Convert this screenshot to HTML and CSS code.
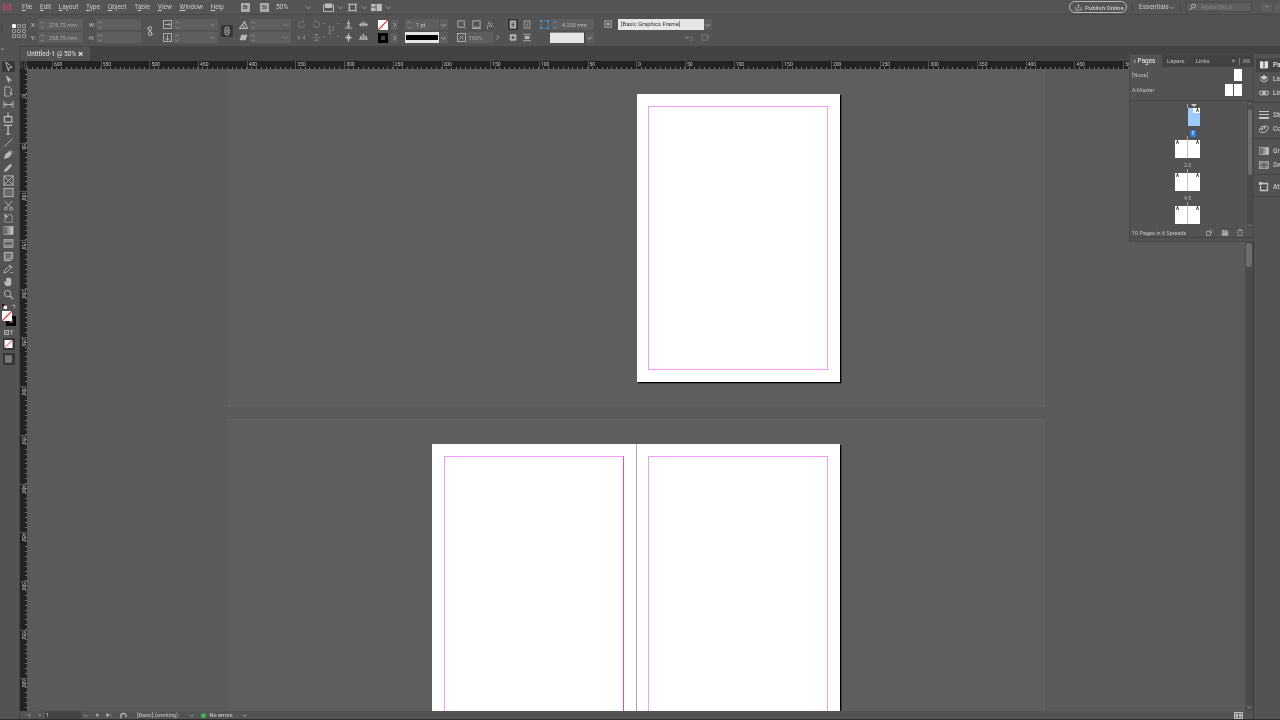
FILE: index.html
```html
<!DOCTYPE html>
<html lang="en">
<head>
    <meta charset="UTF-8">
    <title>Untitled-1 @ 50%</title>
    <link rel="stylesheet" href="styles.css">
</head>
<body>
    <svg class="defs" width="0" height="0">
        <symbol id="spin" viewBox="0 0 8 10"><path d="M2 3.5L4 1.5L6 3.5M2 6.5L4 8.5L6 6.5" fill="none" stroke="currentColor"/></symbol>
        <symbol id="chev" viewBox="0 0 8 8"><path d="M1.5 3L4 5.5L6.5 3" fill="none" stroke="currentColor"/></symbol>
        <symbol id="next" viewBox="0 0 8 8"><path d="M3 1.5L5.5 4L3 6.5" fill="none" stroke="currentColor"/></symbol>
        <symbol id="slash" viewBox="0 0 10 10"><rect width="10" height="10" fill="#fff"/><path d="M0 10L10 0" stroke="#e8272c" stroke-width="1.2"/></symbol>
        <symbol id="page-ic" viewBox="0 0 10 10"><path d="M5 2C3.5 1 2 1 1 1.5V8.500C2 8 3.500 8 5 9C6.500 8 8 8 9 8.500V1.500C8 1 6.500 1 5 2Z" fill="currentColor"/><path d="M5 2V9" stroke="#444"/></symbol>
    </svg>

    <header class="menubar">
        <span class="logo">Id</span>
        <nav class="menus">
            <span><u>F</u>ile</span>
            <span><u>E</u>dit</span>
            <span><u>L</u>ayout</span>
            <span><u>T</u>ype</span>
            <span><u>O</u>bject</span>
            <span>T<u>a</u>ble</span>
            <span><u>V</u>iew</span>
            <span><u>W</u>indow</span>
            <span><u>H</u>elp</span>
        </nav>
        <span class="app-badge badge-br">Br</span>
        <span class="app-badge badge-st">St</span>
        <span class="zoom-level">50%</span>
        <svg class="ic-chev zoom-chev"><use href="#chev"/></svg>
        <svg class="ic-view" viewBox="0 0 12 10"><rect x="0.500" y="2.500" width="11" height="7" fill="none" stroke="currentColor"/><rect x="2" y="0.500" width="8" height="5" fill="currentColor"/></svg>
        <svg class="ic-chev"><use href="#chev"/></svg>
        <svg class="ic-view view-next" viewBox="0 0 12 10"><path d="M2.500 1.500H9.500V8.500H2.500Z" fill="none" stroke="currentColor" stroke-width="1.500"/><path d="M0 0H2M10 0H12M0 10H2M10 10H12" stroke="currentColor"/></svg>
        <svg class="ic-chev"><use href="#chev"/></svg>
        <svg class="ic-view view-next" viewBox="0 0 12 10"><rect y="1" width="5" height="3" fill="currentColor"/><rect x="6" y="1" width="6" height="8" fill="currentColor"/><rect y="5" width="5" height="4" fill="currentColor"/></svg>
        <svg class="ic-chev"><use href="#chev"/></svg>

        <div class="menu-right">
            <span class="publish">
                <svg viewBox="0 0 8 8"><path d="M1 3.500V7H7V3.500M4 5V1M2.700 2.200L4 1L5.300 2.200" fill="none" stroke="currentColor" stroke-width=".8"/></svg>
                Publish Online
            </span>
            <span class="essentials">Essentials</span>
            <svg class="ic-chev"><use href="#chev"/></svg>
            <span class="menu-sep"></span>
            <span class="search">
                <svg viewBox="0 0 8 8"><circle cx="4.500" cy="3" r="2" fill="none" stroke="currentColor" stroke-width=".8"/><path d="M3 4.500L1 7" stroke="currentColor"/></svg>
                Adobe Stock
            </span>
            <span class="win-btn">&minus;</span>
            <span class="win-btn win-cut"></span>
        </div>
    </header>

    <section class="controlbar">
        <div class="grip"></div>
        <div class="proxy">
            <i class="on"></i><i></i><i></i><i></i><i></i><i></i><i></i><i></i><i></i>
        </div>

        <div class="group g-pos">
            <div class="row"><label>X:</label><div class="field"><svg class="ic-spin"><use href="#spin"/></svg>276.75 mm</div></div>
            <div class="row"><label>Y:</label><div class="field"><svg class="ic-spin"><use href="#spin"/></svg>258.75 mm</div></div>
        </div>
        <div class="group g-size">
            <div class="row"><label>W:</label><div class="field"><svg class="ic-spin"><use href="#spin"/></svg></div></div>
            <div class="row"><label>H:</label><div class="field"><svg class="ic-spin"><use href="#spin"/></svg></div></div>
        </div>
        <svg class="ic-link" viewBox="0 0 8 10"><rect x="2.500" y=".5" width="3" height="4" rx="1.500" fill="none" stroke="currentColor"/><rect x="2.500" y="5.500" width="3" height="4" rx="1.500" fill="none" stroke="currentColor"/><path d="M1 1.500L7 8.500" stroke="currentColor"/></svg>

        <div class="group g-scale">
            <div class="row">
                <svg class="ic-box" viewBox="0 0 10 10"><rect x=".5" y=".5" width="9" height="9" fill="none" stroke="currentColor"/><path d="M2 5H8M6 3L8 5L6 7" fill="none" stroke="currentColor"/></svg>
                <div class="field"><svg class="ic-spin"><use href="#spin"/></svg><svg class="ic-chev end"><use href="#chev"/></svg></div>
            </div>
            <div class="row">
                <svg class="ic-box" viewBox="0 0 10 10"><rect x=".5" y=".5" width="9" height="9" fill="none" stroke="currentColor"/><path d="M5 2V8M3 6L5 8L7 6" fill="none" stroke="currentColor"/></svg>
                <div class="field"><svg class="ic-spin"><use href="#spin"/></svg><svg class="ic-chev end"><use href="#chev"/></svg></div>
            </div>
        </div>
        <div class="lock-btn"><svg viewBox="0 0 6 10"><rect x="1" y="1" width="4" height="8" rx="2" fill="none" stroke="currentColor"/><path d="M3 3V7" stroke="currentColor"/></svg></div>

        <div class="group g-rot">
            <div class="row">
                <svg class="ic-box" viewBox="0 0 8 8"><path d="M0.500 7.500H7.500L5 1.500Z M3.500 4.500L5 7.500" fill="none" stroke="currentColor"/></svg>
                <div class="field"><svg class="ic-spin"><use href="#spin"/></svg><svg class="ic-chev end"><use href="#chev"/></svg></div>
            </div>
            <div class="row">
                <svg class="ic-box" viewBox="0 0 8 8"><path d="M2 1.500H7.500L6 6.500H0.500Z" fill="currentColor"/></svg>
                <div class="field"><svg class="ic-spin"><use href="#spin"/></svg><svg class="ic-chev end"><use href="#chev"/></svg></div>
            </div>
        </div>

        <div class="icon-grid dim g-rotate">
            <svg viewBox="0 0 10 10"><path d="M8.500 5A3.500 3.500 0 1 1 5 1.500H7" fill="none" stroke="currentColor"/><path d="M7 0V3" stroke="currentColor"/></svg>
            <svg viewBox="0 0 10 10"><path d="M1.500 5A3.500 3.500 0 1 0 5 1.500H3" fill="none" stroke="currentColor"/><path d="M3 0V3" stroke="currentColor"/></svg>
            <svg viewBox="0 0 10 10"><path d="M1 2L4 5L1 8ZM9 2L6 5L9 8Z" fill="currentColor"/></svg>
            <svg viewBox="0 0 10 10"><path d="M2 1L5 4L8 1ZM2 9L5 6L8 9Z" fill="currentColor"/><path d="M1 5H9" stroke="currentColor"/></svg>
        </div>
        <div class="p-proxy">P</div>

        <div class="icon-grid g-align">
            <svg viewBox="0 0 10 10"><path d="M5 0V3M1 9H9M5 5V9M3 7H7" stroke="currentColor" fill="none"/><circle cx="5" cy="4" r="1.500" fill="currentColor"/></svg>
            <svg viewBox="0 0 10 10"><path d="M0 5H10" stroke="currentColor"/><path d="M1 7V4L3 3V7ZM4 7V2L6 2V7ZM7 7V3L9 4V7Z" fill="currentColor"/></svg>
            <svg viewBox="0 0 10 10"><path d="M5 0V10M1 5H9" stroke="currentColor"/><circle cx="5" cy="5" r="2.500" fill="currentColor"/></svg>
            <svg viewBox="0 0 10 10"><path d="M0 7H10" stroke="currentColor"/><path d="M1 7V4L3 3V7ZM4 7V1L6 1V7ZM7 7V3L9 4V7Z" fill="currentColor"/></svg>
        </div>

        <div class="group g-swatch">
            <div class="row"><svg class="swatch"><use href="#slash"/></svg><span class="arrow-btn"><svg><use href="#next"/></svg></span></div>
            <div class="row"><span class="swatch stroke-swatch"></span><span class="arrow-btn"><svg><use href="#next"/></svg></span></div>
        </div>

        <div class="group g-stroke">
            <div class="row"><div class="field"><svg class="ic-spin"><use href="#spin"/></svg>1 pt</div><span class="arrow-btn wide"><svg><use href="#chev"/></svg></span></div>
            <div class="row"><div class="stroke-line"><b></b></div><span class="arrow-btn wide"><svg><use href="#chev"/></svg></span></div>
        </div>

        <div class="group g-fx">
            <div class="row icons-row">
                <svg viewBox="0 0 10 10"><rect x="1" y="1" width="7" height="7" fill="none" stroke="currentColor"/><path d="M9 9H10" stroke="currentColor"/></svg>
                <svg viewBox="0 0 10 10"><rect x="1" y="1" width="8" height="7" fill="none" stroke="currentColor"/><path d="M0 9.500H10" stroke="currentColor"/></svg>
                <span class="fx-text">fx.</span>
            </div>
            <div class="row">
                <svg class="ic-box" viewBox="0 0 10 10"><rect x=".5" y=".5" width="9" height="9" fill="none" stroke="currentColor"/><path d="M3 3L7 7M7 3L3 7" stroke="currentColor"/></svg>
                <div class="field short">100%</div>
                <svg class="ic-chev"><use href="#next"/></svg>
            </div>
        </div>

        <div class="icon-grid g-wrap">
            <span class="on"><svg viewBox="0 0 10 10"><rect x="1" y="0" width="8" height="10" fill="currentColor"/><path d="M3 3H7M3 5H7M3 7H7" stroke="#333"/></svg></span>
            <span><svg viewBox="0 0 10 10"><rect x="1.500" y=".5" width="7" height="9" fill="none" stroke="currentColor"/><path d="M4 3H6M4 5H6M4 7H6" stroke="currentColor"/></svg></span>
            <span><svg viewBox="0 0 10 10"><rect x="1" y="1" width="8" height="8" fill="currentColor"/><circle cx="5" cy="5" r="2" fill="#535353"/></svg></span>
            <span><svg viewBox="0 0 10 10"><path d="M0 1H10M0 9H10" stroke="currentColor"/><rect x="2" y="3" width="6" height="4" fill="currentColor"/></svg></span>
        </div>

        <div class="group g-corner">
            <div class="row">
                <svg class="ic-corner" viewBox="0 0 10 10"><rect x="1" y="1" width="8" height="8" fill="none" stroke="#4a9ce8" stroke-dasharray="2 1"/><path d="M0 0H2V2H0ZM8 0H10V2H8ZM0 8H2V10H0ZM8 8H10V10H8Z" fill="#4a9ce8"/></svg>
                <div class="field"><svg class="ic-spin"><use href="#spin"/></svg>4.233 mm</div>
            </div>
            <div class="row corner-row"><div class="corner-swatch"></div><span class="arrow-btn wide"><svg><use href="#chev"/></svg></span></div>
        </div>

        <div class="group g-style">
            <div class="row">
                <svg class="ic-box" viewBox="0 0 10 10"><rect x="1" y="1" width="7" height="7" fill="none" stroke="currentColor"/><rect x="3" y="3" width="3" height="3" fill="currentColor"/></svg>
                <div class="style-select">[Basic Graphics Frame]</div>
                <span class="arrow-btn wide"><svg><use href="#chev"/></svg></span>
            </div>
            <div class="row style-tools">
                <svg viewBox="0 0 10 8"><path d="M2 4H7A2 2 0 1 1 7 7M2 4L4 2M2 4L4 6" fill="none" stroke="currentColor"/></svg>
                <svg viewBox="0 0 10 8"><rect x="1" y="1" width="6" height="6" fill="none" stroke="currentColor"/><path d="M7 5L10 2" stroke="currentColor"/></svg>
            </div>
        </div>
    </section>

    <main class="workspace">
        <aside class="tools">
            <div class="tools-head">&raquo;</div>
            <svg class="tool selected" viewBox="0 0 12 12"><path d="M3 1L10 7L6.500 7.500L6 11Z" fill="none" stroke="currentColor"/></svg>
            <svg class="tool" viewBox="0 0 12 12"><path d="M3 1L10 7L6.500 7.500L6 11Z" fill="currentColor"/></svg>
            <svg class="tool" viewBox="0 0 12 12"><path d="M2 1H7L9 3V7M2 1V11H7" fill="none" stroke="currentColor"/><path d="M7 6L11 9L9 9.500L8.500 11.500Z" fill="currentColor"/></svg>
            <svg class="tool" viewBox="0 0 12 12"><path d="M1 2V10M11 2V10M2 6H10M4 4L2 6L4 8M8 4L10 6L8 8" fill="none" stroke="currentColor"/></svg>
            <svg class="tool" viewBox="0 0 12 12"><rect x="1.500" y="5" width="8" height="6" fill="none" stroke="currentColor" stroke-width="1.300"/><path d="M5.500 0V5M4 3.500L5.500 5.500L7 3.500" fill="none" stroke="currentColor"/><path d="M11 10H12V11H11Z" fill="currentColor"/></svg>
            <svg class="tool" viewBox="0 0 12 12"><path d="M1 1.500H10M5.500 1.500V11M3.500 11H7.500" fill="none" stroke="currentColor" stroke-width="1.500"/></svg>
            <svg class="tool" viewBox="0 0 12 12"><path d="M1.500 10.500L10.500 1.500" stroke="currentColor"/></svg>
            <svg class="tool" viewBox="0 0 12 12"><path d="M1 11L2.500 6L7 2L10 5L6 9.500Z" fill="currentColor"/><path d="M8 1L11 4" stroke="currentColor"/></svg>
            <svg class="tool" viewBox="0 0 12 12"><path d="M1 11L2 8L8 2L10 4L4 10Z" fill="currentColor"/></svg>
            <svg class="tool" viewBox="0 0 12 12"><rect x="1" y="1" width="10" height="10" fill="none" stroke="currentColor"/><path d="M1 1L11 11M11 1L1 11" stroke="currentColor"/></svg>
            <svg class="tool" viewBox="0 0 12 12"><rect x="1" y="1.500" width="10" height="9" fill="#6a6a6a" stroke="currentColor"/></svg>
            <svg class="tool" viewBox="0 0 12 12"><circle cx="3" cy="9.500" r="1.500" fill="none" stroke="currentColor"/><circle cx="9" cy="9.500" r="1.500" fill="none" stroke="currentColor"/><path d="M4 8L10 1M8 8L2 1" stroke="currentColor"/></svg>
            <svg class="tool" viewBox="0 0 12 12"><rect x="2" y="2" width="8" height="8" fill="none" stroke="currentColor" stroke-dasharray="2 1"/><path d="M1 1L6 4L4 4.500L3.500 6.500Z" fill="currentColor"/></svg>
            <svg class="tool" viewBox="0 0 12 12"><defs><linearGradient id="gr"><stop offset="0" stop-color="#555"/><stop offset="1" stop-color="#ccc"/></linearGradient></defs><rect x="1" y="1.500" width="10" height="9" fill="url(#gr)" stroke="currentColor" stroke-width=".6"/></svg>
            <svg class="tool" viewBox="0 0 12 12"><rect x="1" y="1.500" width="10" height="9" fill="#8a8a8a" stroke="currentColor" stroke-width=".6"/><path d="M2 6H10" stroke="#555" stroke-width="2"/></svg>
            <svg class="tool" viewBox="0 0 12 12"><path d="M1.500 1.500H10.500V8L8 10.500H1.500Z" fill="#8a8a8a" stroke="currentColor"/><path d="M3 4H9M3 6.500H7" stroke="#444"/></svg>
            <svg class="tool" viewBox="0 0 12 12"><path d="M1 11L2 8L7 3L9 5L4 10Z" fill="none" stroke="currentColor"/><path d="M7 1.500L10.500 5L9 5.500L6.500 3Z" fill="currentColor"/><path d="M8 10.500H11" stroke="currentColor"/></svg>
            <svg class="tool" viewBox="0 0 12 12"><path d="M3 11L1 6.500L2 5.500L3.500 7V2.500H4.500V5.500V1.500H6V5.500V2H7.500V5.500V3H9V8.500L8 11Z" fill="currentColor"/></svg>
            <svg class="tool" viewBox="0 0 12 12"><circle cx="5" cy="5" r="3.500" fill="none" stroke="currentColor"/><path d="M7.500 7.500L11 11" stroke="currentColor" stroke-width="1.300"/></svg>
            <div class="color-mini">
                <svg viewBox="0 0 6 6"><rect width="4" height="4" fill="#111"/><rect x="2" y="2" width="4" height="4" fill="#fff"/><path d="M0 4L4 0" stroke="#e8272c"/></svg>
                <svg viewBox="0 0 6 6"><path d="M1 1.500H4.500V5" fill="none" stroke="currentColor"/></svg>
            </div>
            <div class="fill-stroke">
                <span class="stroke-box"></span>
                <svg class="fill-box"><use href="#slash"/></svg>
            </div>
            <div class="format-row">
                <svg viewBox="0 0 6 6"><rect x=".5" y=".5" width="5" height="5" fill="none" stroke="currentColor"/><rect x="2" y="2" width="2" height="2" fill="currentColor"/></svg>
                <svg viewBox="0 0 6 6"><path d="M.5 1H5.500M3 1V6" fill="none" stroke="currentColor"/></svg>
            </div>
            <div class="tool-btn"><svg class="apply"><use href="#slash"/></svg></div>
            <div class="tool-btn"><svg viewBox="0 0 10 10"><rect x="1" y="1" width="8" height="8" fill="#707070" stroke="#999" stroke-width=".6"/><rect x="3" y="3" width="4" height="4" fill="none" stroke="#aaa" stroke-width=".6" stroke-dasharray="1 .5"/></svg></div>
        </aside>

        <div class="docarea">
            <div class="tabbar">
                <div class="tab">Untitled-1 @ 50% <span class="tab-close">&times;</span></div>
            </div>
            <div class="ruler-row">
                <div class="ruler-corner"></div>
                <div class="h-ruler">
                    <span>600</span><span>550</span><span>500</span><span>450</span><span>400</span><span>350</span>
                    <span>300</span><span>250</span><span>200</span><span>150</span><span>100</span><span>50</span>
                    <span>0</span><span>50</span><span>100</span><span>150</span><span>200</span><span>250</span>
                    <span>300</span><span>350</span><span>400</span><span>450</span><span>500</span>
                </div>
            </div>
            <div class="view-row">
                <div class="v-ruler">
                    <span>0</span><span>50</span><span>100</span><span>150</span><span>200</span><span>250</span><span>300</span>
                    <span>350</span><span>400</span><span>450</span><span>500</span><span>550</span><span>600</span>
                </div>
                <div class="canvas">
                    <div class="board board-first">
                        <div class="page"><div class="guide"></div></div>
                    </div>
                    <div class="board board-second">
                        <div class="page page-left"><div class="guide"></div></div>
                        <div class="page"><div class="guide"></div></div>
                    </div>
                </div>
                <div class="v-scroll">
                    <div class="v-thumb"></div>
                    <svg class="ic-chev"><use href="#chev"/></svg>
                </div>
            </div>
            <footer class="statusbar">
                <svg class="st-ic st-first" viewBox="0 0 8 8"><path d="M1.500 1V7M7 1.500L3.500 4L7 6.500Z" fill="currentColor" stroke="currentColor" stroke-width=".5"/></svg>
                <svg class="st-ic" viewBox="0 0 8 8"><path d="M6 1.500L2.500 4L6 6.500Z" fill="currentColor"/></svg>
                <div class="page-field">1</div>
                <svg class="ic-chev light"><use href="#chev"/></svg>
                <svg class="st-ic st-light st-next" viewBox="0 0 8 8"><path d="M2 1.500L5.500 4L2 6.500Z" fill="currentColor"/></svg>
                <svg class="st-ic st-light" viewBox="0 0 8 8"><path d="M6.500 1V7M1 1.500L4.500 4L1 6.500Z" fill="currentColor" stroke="currentColor" stroke-width=".5"/></svg>
                <svg class="st-ic st-light st-arc" viewBox="0 0 8 8"><path d="M1 7V4.500A3 3 0 0 1 7 4.500V6" fill="none" stroke="currentColor" stroke-width="1.400"/></svg>
                <span class="profile">[Basic] (working)</span>
                <svg class="ic-chev light"><use href="#chev"/></svg>
                <span class="status-dot"></span>
                <span class="errors">No errors</span>
                <svg class="ic-chev light"><use href="#chev"/></svg>
                <svg class="split-view" viewBox="0 0 9 7"><rect x=".5" y=".5" width="8" height="6" fill="none" stroke="currentColor"/><rect x="1.500" y="1.500" width="2.500" height="4" fill="currentColor"/><rect x="5" y="1.500" width="2.500" height="4" fill="currentColor"/></svg>
            </footer>
        </div>

        <aside class="dock">
            <div class="dock-section">
                <div class="dock-item active"><svg><use href="#page-ic"/></svg><span>Pa</span></div>
                <div class="dock-item"><svg viewBox="0 0 10 10"><path d="M5 1L9 3.500L5 6L1 3.500Z" fill="currentColor"/><path d="M1 5.500L5 8L9 5.500" fill="none" stroke="currentColor"/></svg><span>La</span></div>
                <div class="dock-item"><svg viewBox="0 0 10 10"><rect x=".5" y="3" width="4" height="4" rx="2" fill="none" stroke="currentColor"/><rect x="3.500" y="3" width="3" height="4" rx="1.500" fill="none" stroke="currentColor"/><rect x="5.500" y="3" width="4" height="4" rx="2" fill="none" stroke="currentColor"/></svg><span>Lin</span></div>
            </div>
            <div class="dock-section">
                <div class="dock-item"><svg viewBox="0 0 10 10"><path d="M0 1.500H10M0 4.500H10" stroke="currentColor"/><path d="M0 8H10" stroke="currentColor" stroke-width="2"/></svg><span>Str</span></div>
                <div class="dock-item"><svg viewBox="0 0 10 10"><path d="M.5 6.500C.5 4 3 2 6 2C8 2 9.500 3 9.500 4.500C9.500 6 7 5.500 7 7C7 8 6 8.500 4.500 8.500C2 8.500 .5 8 .5 6.500Z" fill="none" stroke="currentColor"/><circle cx="3" cy="5" r="1" fill="currentColor"/><circle cx="5.500" cy="3.800" r="1" fill="currentColor"/></svg><span>Co</span></div>
            </div>
            <div class="dock-section">
                <div class="dock-item"><svg viewBox="0 0 10 10"><rect x=".5" y="1.500" width="9" height="7" fill="url(#gr)" stroke="currentColor" stroke-width=".6"/></svg><span>Gr</span></div>
                <div class="dock-item"><svg viewBox="0 0 10 10"><rect x=".5" y="1.500" width="9" height="7" fill="#8a8a8a" stroke="currentColor" stroke-width=".6"/><path d="M1 5H9" stroke="#555"/><path d="M5 1.500V8.500" stroke="#555"/></svg><span>Sw</span></div>
            </div>
            <div class="dock-section">
                <div class="dock-item"><svg viewBox="0 0 10 10"><path d="M2.500 1.500H8.500V8.500H1.500V4" fill="none" stroke="currentColor" stroke-width="1.300"/><rect x="0" y="0" width="3" height="3" fill="currentColor"/></svg><span>Att</span></div>
            </div>
        </aside>

        <section class="pages-panel">
            <div class="panel-tabs">
                <span class="panel-tab active"><i>&#8661;</i> Pages</span>
                <span class="panel-tab layers">Layers</span>
                <span class="panel-tab links">Links</span>
                <span class="panel-more">&raquo;</span>
                <span class="panel-menu"></span>
            </div>
            <div class="masters">
                <div class="master-row"><span>[None]</span><div class="master-pages"><i></i></div></div>
                <div class="master-row"><span>A-Master</span><div class="master-pages"><i></i><i></i></div></div>
            </div>
            <div class="page-list">
                <div class="thumbs">
                    <div class="marker"></div>
                    <div class="spread spread-single"><div class="leaf sel"><b>A</b></div></div>
                    <div class="spread-label"><span class="num-sel">1</span></div>
                    <div class="spread"><div class="leaf"><b>A</b></div><div class="leaf right"><b>A</b></div></div>
                    <div class="spread-label">2-3</div>
                    <div class="spread"><div class="leaf"><b>A</b></div><div class="leaf right"><b>A</b></div></div>
                    <div class="spread-label">4-5</div>
                    <div class="spread"><div class="leaf"><b>A</b></div><div class="leaf right"><b>A</b></div></div>
                </div>
                <div class="list-scroll">
                    <svg class="flip"><use href="#chev"/></svg>
                    <div class="list-thumb"></div>
                    <svg class="end"><use href="#chev"/></svg>
                </div>
            </div>
            <div class="panel-foot">
                <span>10 Pages in 6 Spreads</span>
                <svg viewBox="0 0 10 8"><rect x=".5" y="3" width="5" height="4.500" fill="none" stroke="currentColor"/><path d="M3 3L5.500 .5L8 3L5.500 5.500" fill="none" stroke="currentColor"/></svg>
                <svg viewBox="0 0 10 8"><path d="M1 1H7L9 3V8H1Z" fill="currentColor"/><path d="M1 3.500H5V.5" fill="none" stroke="#535353" stroke-width=".6"/></svg>
                <svg viewBox="0 0 10 8"><path d="M2 1.500H8M3.500 1.500V.5H6.500V1.500M2.500 2.500V8H7.500V2.500" fill="none" stroke="currentColor" stroke-width=".9"/></svg>
            </div>
        </section>
    </main>
</body>
</html>
```

FILE: styles.css
```css
* {
    box-sizing: border-box;
}
html, body {
    margin: 0;
    width: 1280px;
    height: 720px;
    overflow: hidden;
}
body {
    display: flex;
    flex-direction: column;
    font-family: 'Roboto', 'Liberation Sans', sans-serif;
    font-size: 6.500px;
    color: #c9c9c9;
    background-color: #535353;
    border-bottom: 1px solid #2b2b2b;
}
svg {
    display: block;
    flex: none;
}
.defs {
    position: absolute;
}
/* the reference is a soft, scaled capture of the app chrome */
.menubar, .controlbar, .tools, .tabbar, .ruler-row, .v-ruler, .statusbar, .dock, .pages-panel {
    filter: blur(.35px);
}

/* menu bar */
.menubar {
    display: flex;
    align-items: center;
    height: 15px;
    flex: none;
    border-bottom: 1px solid #474747;
    background-color: #555;
}
.logo {
    width: 22px;
    padding-left: 2px;
    font-size: 11px;
    font-weight: 700;
    color: #b5436f;
}
.menus {
    display: flex;
    gap: 7.800px;
}
.app-badge {
    display: flex;
    align-items: center;
    justify-content: center;
    width: 9px;
    height: 9px;
    font-size: 5px;
    font-weight: 700;
    color: #444;
    background-color: #a9a9a9;
}
.badge-br {
    margin-left: 17px;
}
.badge-st {
    margin-left: 10px;
}
.zoom-level {
    width: 29px;
    margin-left: 7px;
}
.ic-chev {
    width: 7px;
    height: 7px;
    color: #a8a8a8;
}
.zoom-chev {
    margin-right: 11px;
}
.ic-view {
    width: 11px;
    height: 9px;
    margin-right: 3px;
    color: #bdbdbd;
}
.view-next {
    margin-left: 3px;
}
.menu-right {
    display: flex;
    align-items: center;
    margin-left: auto;
}
.publish {
    display: flex;
    align-items: center;
    gap: 3px;
    width: 58px;
    height: 12px;
    padding-left: 5px;
    font-weight: 500;
    font-size: 6px;
    white-space: nowrap;
    border: 1px solid #b5b5b5;
    border-radius: 6px;
}
.publish svg {
    width: 7px;
    height: 7px;
}
.essentials {
    width: 33px;
    margin-left: 5px;
    margin-right: 3px;
    padding-left: 6px;
    border-left: 1px solid #474747;
}
.menu-sep {
    width: 1px;
    height: 10px;
    margin: 0 5px;
    background-color: #474747;
}
.search {
    display: flex;
    align-items: center;
    gap: 4px;
    width: 66px;
    height: 10px;
    padding-left: 2px;
    font-size: 5.500px;
    color: #858585;
    background-color: #5e5e5e;
    border: 1px solid #4a4a4a;
}
.search svg {
    width: 8px;
    height: 8px;
    color: #bdbdbd;
}
.win-btn {
    width: 11px;
    height: 9px;
    margin-left: 9px;
    line-height: 8px;
    text-align: center;
    background-color: #5e5e5e;
}
.win-cut {
    width: 5px;
    margin-left: 3px;
}

/* control panel */
.controlbar {
    display: flex;
    height: 31px;
    flex: none;
    padding-top: 4px;
    font-size: 5.500px;
    color: #b0b0b0;
    background-color: #535353;
}
.grip {
    width: 1px;
    height: 9px;
    margin: 5px 0 0 1px;
    background-color: #444;
}
.proxy {
    display: grid;
    grid-template-columns: repeat(3, 4px);
    grid-auto-rows: 4px;
    gap: 1px;
    width: 14px;
    height: 14px;
    margin: 5px 0 0 10px;
}
.proxy i {
    border: 1px solid #9a9a9a;
    border-radius: 1px;
}
.proxy i.on {
    background-color: #fff;
    border-color: #fff;
}
.group {
    display: flex;
    flex-direction: column;
    gap: 2px;
}
.row {
    display: flex;
    align-items: center;
    height: 11px;
}
.row label {
    width: 7px;
    font-weight: 700;
    color: #a5a5a5;
}
.field {
    display: flex;
    align-items: center;
    flex: 1;
    height: 11px;
    color: #a8a8a8;
    background-color: #5e5e5e;
}
.field.short {
    flex: none;
    width: 26px;
    margin-right: 1px;
    padding-left: 2px;
}
.ic-spin {
    width: 8px;
    height: 10px;
    margin-right: 3px;
    color: #8d8d8d;
}
.ic-chev.end {
    margin-left: auto;
    margin-right: 2px;
    color: #8d8d8d;
}
.ic-box {
    width: 9px;
    height: 9px;
    margin-right: 1px;
    color: #b5b5b5;
}
.g-pos {
    width: 52px;
    margin-left: 5px;
}
.g-size {
    width: 52px;
    margin-left: 6px;
}
.ic-link {
    width: 8px;
    height: 10px;
    margin: 7px 0 0 5px;
    color: #b5b5b5;
}
.g-scale {
    width: 55px;
    margin-left: 9px;
}
.lock-btn {
    display: flex;
    align-items: center;
    justify-content: center;
    width: 12px;
    height: 12px;
    margin: 6px 0 0 3px;
    color: #b5b5b5;
    background-color: #363636;
    border-radius: 2px;
}
.lock-btn svg {
    width: 6px;
    height: 10px;
}
.g-rot {
    width: 52px;
    margin-left: 6px;
}
.icon-grid {
    display: grid;
    grid-template-columns: repeat(2, 10px);
    grid-auto-rows: 11px;
    row-gap: 2px;
    column-gap: 5px;
    color: #b5b5b5;
}
.icon-grid svg {
    width: 9px;
    height: 9px;
    margin: 1px 0 0;
}
.icon-grid.dim {
    color: #7a7a7a;
}
.g-rotate {
    margin-left: 6px;
}
.p-proxy {
    width: 16px;
    height: 14px;
    margin: 4px 0 0 1px;
    font-family: 'Liberation Serif', serif;
    font-size: 13px;
    line-height: 14px;
    text-align: center;
    color: #7a7a7a;
    background:
        linear-gradient(#7a7a7a, #7a7a7a) 0 0 / 2px 1px no-repeat,
        linear-gradient(#7a7a7a, #7a7a7a) 100% 0 / 2px 1px no-repeat,
        linear-gradient(#7a7a7a, #7a7a7a) 0 100% / 2px 1px no-repeat,
        linear-gradient(#7a7a7a, #7a7a7a) 100% 100% / 2px 1px no-repeat;
}
.g-align {
    margin-left: 5px;
}
.g-swatch {
    width: 20px;
    margin-left: 9px;
}
.swatch {
    width: 10px;
    height: 10px;
    margin-right: 3px;
}
.stroke-swatch {
    background-color: #000;
    box-shadow: inset 0 0 0 3px #000, inset 0 0 0 5px #444;
}
.arrow-btn {
    display: block;
    width: 7px;
    height: 10px;
    padding-top: 1px;
    color: #b5b5b5;
    background-color: #5e5e5e;
}
.arrow-btn.wide {
    width: 8px;
    height: 11px;
    padding-top: 2px;
}
.arrow-btn svg {
    width: 7px;
    height: 8px;
}
.g-stroke {
    width: 43px;
    margin-left: 7px;
}
.g-stroke .field {
    color: #c9c9c9;
}
.g-stroke .arrow-btn {
    margin-left: 1px;
}
.stroke-line {
    flex: 1;
    height: 11px;
    padding: 3px 1px;
    background-color: #e6e6e6;
}
.stroke-line b {
    display: block;
    height: 5px;
    background-color: #000;
}
.g-fx {
    width: 46px;
    margin-left: 9px;
}
.icons-row {
    gap: 6px;
    color: #b5b5b5;
}
.icons-row svg {
    width: 9px;
    height: 9px;
}
.fx-text {
    font-family: 'Liberation Serif', serif;
    font-size: 8px;
    font-style: italic;
}
.g-wrap {
    grid-template-columns: repeat(2, 10px);
    column-gap: 4px;
    margin-left: 5px;
}
.g-wrap span {
    display: block;
    padding: 1px;
}
.g-wrap span.on {
    background-color: #333;
}
.g-wrap svg {
    width: 8px;
    height: 9px;
    margin: 0;
}
.g-corner {
    width: 54px;
    margin-left: 8px;
}
.ic-corner {
    width: 9px;
    height: 9px;
    margin-right: 2px;
}
.corner-row {
    padding-left: 10px;
}
.corner-swatch {
    width: 35px;
    height: 11px;
    margin-right: 1px;
    background-color: #e6e6e6;
    border-right: 1px solid #444;
    box-shadow: inset 0 1px 0 #888;
}
.g-corner .field {
    color: #bdbdbd;
}
.g-style {
    width: 108px;
    margin-left: 10px;
}
.g-style .ic-box {
    margin-right: 5px;
}
.style-select {
    flex: 1;
    height: 11px;
    padding-left: 3px;
    font-size: 5.800px;
    line-height: 11px;
    color: #333;
    background-color: #e6e6e6;
}
.style-tools {
    justify-content: flex-end;
    gap: 8px;
    padding-right: 2px;
    color: #7e7e7e;
}
.style-tools svg {
    width: 9px;
    height: 7px;
}

/* workspace */
.workspace {
    position: relative;
    display: flex;
    flex: 1;
    min-height: 0;
    background-color: #434343;
}
.tools {
    display: flex;
    flex-direction: column;
    align-items: center;
    flex: none;
    width: 20px;
    padding-right: 2px;
    color: #b8b8b8;
    background-color: #535353;
    border-right: 1px solid #444;
}
.tools-head {
    align-self: flex-start;
    height: 15px;
    padding-left: 1px;
    font-size: 6px;
    line-height: 6px;
}
.tool {
    width: 11px;
    height: 11px;
    margin-bottom: 1.650px;
}
.tool.selected {
    width: 13px;
    height: 11px;
    padding: 0 1px;
    background-color: #383838;
    border-radius: 1px;
}
.color-mini {
    display: flex;
    justify-content: space-between;
    width: 14px;
    margin-top: 3px;
}
.color-mini svg {
    width: 5px;
    height: 5px;
}
.fill-stroke {
    position: relative;
    width: 14px;
    height: 15px;
    margin-top: 2px;
}
.fill-box {
    position: absolute;
    left: 0;
    top: 0;
    width: 10px;
    height: 10px;
}
.stroke-box {
    position: absolute;
    right: 0;
    bottom: 0;
    width: 10px;
    height: 10px;
    border: 3px solid #000;
}
.format-row {
    display: flex;
    justify-content: space-between;
    width: 10px;
    margin-top: 4px;
}
.format-row svg {
    width: 5px;
    height: 5px;
}
.tool-btn {
    display: flex;
    align-items: center;
    justify-content: center;
    width: 12px;
    height: 12px;
    margin-top: 3px;
    background-color: #363636;
    border-radius: 1px;
}
.tool-btn svg {
    width: 9px;
    height: 8px;
}
.docarea {
    display: flex;
    flex-direction: column;
    flex: 1;
    min-width: 0;
}
.tabbar {
    display: flex;
    align-items: flex-end;
    flex: none;
    height: 15px;
}
.tab {
    display: flex;
    align-items: center;
    justify-content: space-between;
    width: 70px;
    height: 14px;
    padding: 0 7px;
    font-size: 6.400px;
    font-weight: 500;
    color: #cfcfcf;
    background-color: #535353;
}
.tab-close {
    font-size: 9px;
    font-weight: 700;
    color: #eee;
}
.ruler-row {
    display: flex;
    flex: none;
    height: 8px;
    background-color: #222;
}
.ruler-corner {
    flex: none;
    width: 7px;
    border-right: 1px solid #555;
    background: repeating-linear-gradient(90deg, #444 0 1px, transparent 1px 2px);
}
.h-ruler {
    display: flex;
    flex: 1;
    padding-left: 25px;
    overflow: hidden;
    background: repeating-linear-gradient(90deg, #6e6e6e 0 1px, transparent 1px 4.870px) 0 100% / 100% 2px no-repeat;
}
.h-ruler span {
    flex: 0 0 48.700px;
    padding-left: 1px;
    font-size: 5px;
    line-height: 6px;
    color: #c4c4c4;
    border-left: 1px solid #555;
}
.view-row {
    display: flex;
    flex: 1;
    min-height: 0;
}
.v-ruler {
    display: flex;
    flex-direction: column;
    flex: none;
    width: 7px;
    padding-top: 25px;
    overflow: hidden;
    background: repeating-linear-gradient(180deg, #6e6e6e 0 1px, transparent 1px 4.870px) 100% 0 / 2px 100% no-repeat, #222;
}
.v-ruler span {
    flex: 0 0 48.700px;
    font-size: 5px;
    line-height: 6px;
    writing-mode: vertical-rl;
    color: #c4c4c4;
    border-top: 1px solid #555;
}

/* document canvas */
.canvas {
    flex: 1;
    min-width: 0;
    overflow: hidden;
    background-color: #5a5a5a;
}
.board {
    display: flex;
    width: 817px;
    height: 338px;
    margin-left: 201px;
    padding-top: 25px;
    background-color: #5e5e5e;
    border: 1px solid #636363;
    border-top: 0;
}
.board-first {
    padding-left: 408px;
}
.board-second {
    height: 340px;
    margin-top: 12px;
    padding-top: 24px;
    padding-left: 203px;
    border-top: 1px solid #636363;
    border-bottom: 0;
}
.page {
    flex: none;
    width: 203px;
    height: 288px;
    padding: 12px 12px 12px 11px;
    background-color: #fff;
    box-shadow: 1px 1px 0 #000, 1.500px 1.500px 0 #222;
}
.page-left {
    width: 205px;
    padding: 12px;
    box-shadow: none;
    border-right: 1px solid #a9a9a9;
}
.guide {
    height: 100%;
    border: 1px solid #f59cf9;
}
.page-left .guide {
    border-right-color: #b65aee;
}
.v-scroll {
    display: flex;
    flex-direction: column;
    flex: none;
    width: 8px;
    padding-top: 174px;
    background-color: #4b4b4b;
}
.v-thumb {
    width: 6px;
    height: 24px;
    margin-left: 1px;
    border-radius: 3px;
    background-color: #6d6d6d;
}
.v-scroll .ic-chev {
    width: 6px;
    height: 8px;
    margin-top: auto;
    margin-left: 1px;
}

/* status bar */
.statusbar {
    display: flex;
    align-items: center;
    flex: none;
    height: 8px;
    padding-left: 4px;
    font-size: 5.500px;
    color: #c4c4c4;
    background-color: #535353;
}
.st-ic {
    width: 6px;
    height: 6px;
    color: #7d7d7d;
}
.st-first {
    margin-left: 1px;
    margin-right: 5px;
}
.st-light {
    margin-left: 5px;
    color: #bdbdbd;
}
.st-next {
    margin-left: 6px;
}
.st-arc {
    width: 7px;
    height: 7px;
    margin-left: 7.500px;
}
.page-field {
    width: 36px;
    height: 8px;
    margin-left: 3px;
    padding-left: 1px;
    line-height: 8px;
    background-color: #444;
}
.ic-chev.light {
    margin-left: 1px;
    color: #a8a8a8;
}
.profile {
    width: 50px;
    margin-left: 10.500px;
}
.status-dot {
    width: 5px;
    height: 5px;
    margin-left: 5.500px;
    border-radius: 50%;
    background-color: #3fb34f;
}
.errors {
    width: 30px;
    margin-left: 4px;
    font-weight: 500;
}
.split-view {
    width: 9px;
    height: 7px;
    margin-left: auto;
    margin-right: 10px;
    color: #bdbdbd;
}

/* right dock */
.dock {
    flex: none;
    width: 27px;
    margin-top: 8px;
    overflow: hidden;
    background-color: #535353;
    border-left: 1px solid #3a3a3a;
}
.dock-section {
    padding: 5px 0 2px 2px;
    border-bottom: 1px solid #444;
}
.dock-section:first-child {
    padding-top: 4px;
}
.dock-item {
    display: flex;
    align-items: center;
    gap: 4px;
    height: 14px;
    padding-left: 3px;
    font-size: 6.500px;
    font-weight: 500;
    white-space: nowrap;
    color: #c4c4c4;
}
.dock-item svg {
    width: 10px;
    height: 10px;
}
.dock-item.active {
    background-color: #444;
    color: #e4e4e4;
}

/* pages panel */
.pages-panel {
    position: absolute;
    top: 8px;
    right: 26px;
    display: flex;
    flex-direction: column;
    width: 125px;
    height: 188px;
    padding-bottom: 3px;
    font-size: 5.500px;
    color: #bcbcbc;
    background-color: #535353;
    border: 1px solid #484848;
}
.panel-tabs {
    display: flex;
    align-items: center;
    flex: none;
    height: 12px;
    background-color: #434343;
}
.panel-tab {
    line-height: 12px;
}
.panel-tab.active {
    width: 32px;
    padding-left: 3px;
    font-size: 6.400px;
    font-weight: 500;
    color: #dedede;
    background-color: #535353;
}
.panel-tab i {
    font-style: normal;
    font-size: 4px;
}
.layers {
    margin-left: 5px;
    font-size: 6px;
}
.links {
    margin-left: 11px;
    font-size: 6px;
}
.panel-more {
    margin-left: auto;
    padding-right: 4px;
    font-size: 7px;
    line-height: 7px;
    border-right: 1px solid #7a7a7a;
}
.panel-menu {
    width: 7px;
    height: 4px;
    margin: 0 3px;
    background-color: #6e6e6e;
}
.masters {
    flex: none;
    height: 34px;
    padding: 0 11px 0 2px;
    border-bottom: 1px solid #444;
}
.master-row {
    display: flex;
    align-items: center;
    justify-content: space-between;
    height: 15px;
}
.master-pages {
    display: flex;
    gap: 1px;
}
.master-pages i {
    width: 8px;
    height: 12px;
    background-color: #fff;
}
.page-list {
    display: flex;
    flex: 1;
    min-height: 0;
    overflow: hidden;
}
.thumbs {
    display: flex;
    flex-direction: column;
    align-items: center;
    flex: 1;
    padding: 3px 2px 0 0;
}
.marker {
    width: 0;
    height: 4px;
    margin-left: 13px;
    border: 3px solid transparent;
    border-top: 3px solid #d0d0d0;
    border-bottom: 0;
}
.spread {
    position: relative;
    display: flex;
    flex: none;
    gap: 1px;
    width: 25px;
    height: 18px;
    background-color: #c4c4c4;
}
/* binding line that pokes out above each spread */
.spread::before {
    content: "";
    position: absolute;
    left: 12px;
    top: -4px;
    width: 1px;
    height: 4px;
    background-color: #a0a0a0;
}
.spread-single {
    justify-content: flex-end;
    background-color: transparent;
}
.leaf {
    flex: 1;
    height: 18px;
    padding-left: 1px;
    background-color: #fff;
}
.leaf.right {
    padding-right: 1px;
    text-align: right;
}
.leaf b {
    display: block;
    font-size: 4.500px;
    line-height: 5px;
    color: #333;
}
.leaf.sel {
    flex: 0 0 12px;
    padding-right: 1px;
    text-align: right;
    background: linear-gradient(#fff, #fff) 100% 0 / 7px 5px no-repeat, #9ccbff;
}
.spread-label {
    flex: none;
    height: 15px;
    font-size: 5px;
    line-height: 15px;
    text-align: center;
}
.spread-label:nth-child(3) {
    height: 14px;
}
.num-sel {
    display: inline-block;
    width: 6px;
    height: 7px;
    margin-left: 11px;
    line-height: 7px;
    font-weight: 700;
    color: #fff;
    background-color: #2d80dc;
}
.list-scroll {
    display: flex;
    flex-direction: column;
    flex: none;
    width: 6px;
    color: #8d8d8d;
    background-color: #4b4b4b;
}
.list-scroll svg {
    width: 6px;
    height: 6px;
}
.flip {
    transform: rotate(180deg);
}
.list-scroll .end {
    margin-top: auto;
}
.list-thumb {
    width: 4px;
    height: 66px;
    margin: 2px 0 0 1px;
    border-radius: 2px;
    background-color: #6d6d6d;
}
.panel-foot {
    display: flex;
    align-items: center;
    flex: none;
    height: 10px;
    padding-left: 2px;
    color: #c4c4c4;
    border-bottom: 1px solid #444;
}
.panel-foot span {
    width: 74px;
}
.panel-foot svg {
    width: 8px;
    height: 7px;
    margin-right: 7px;
    color: #a8a8a8;
}
```
